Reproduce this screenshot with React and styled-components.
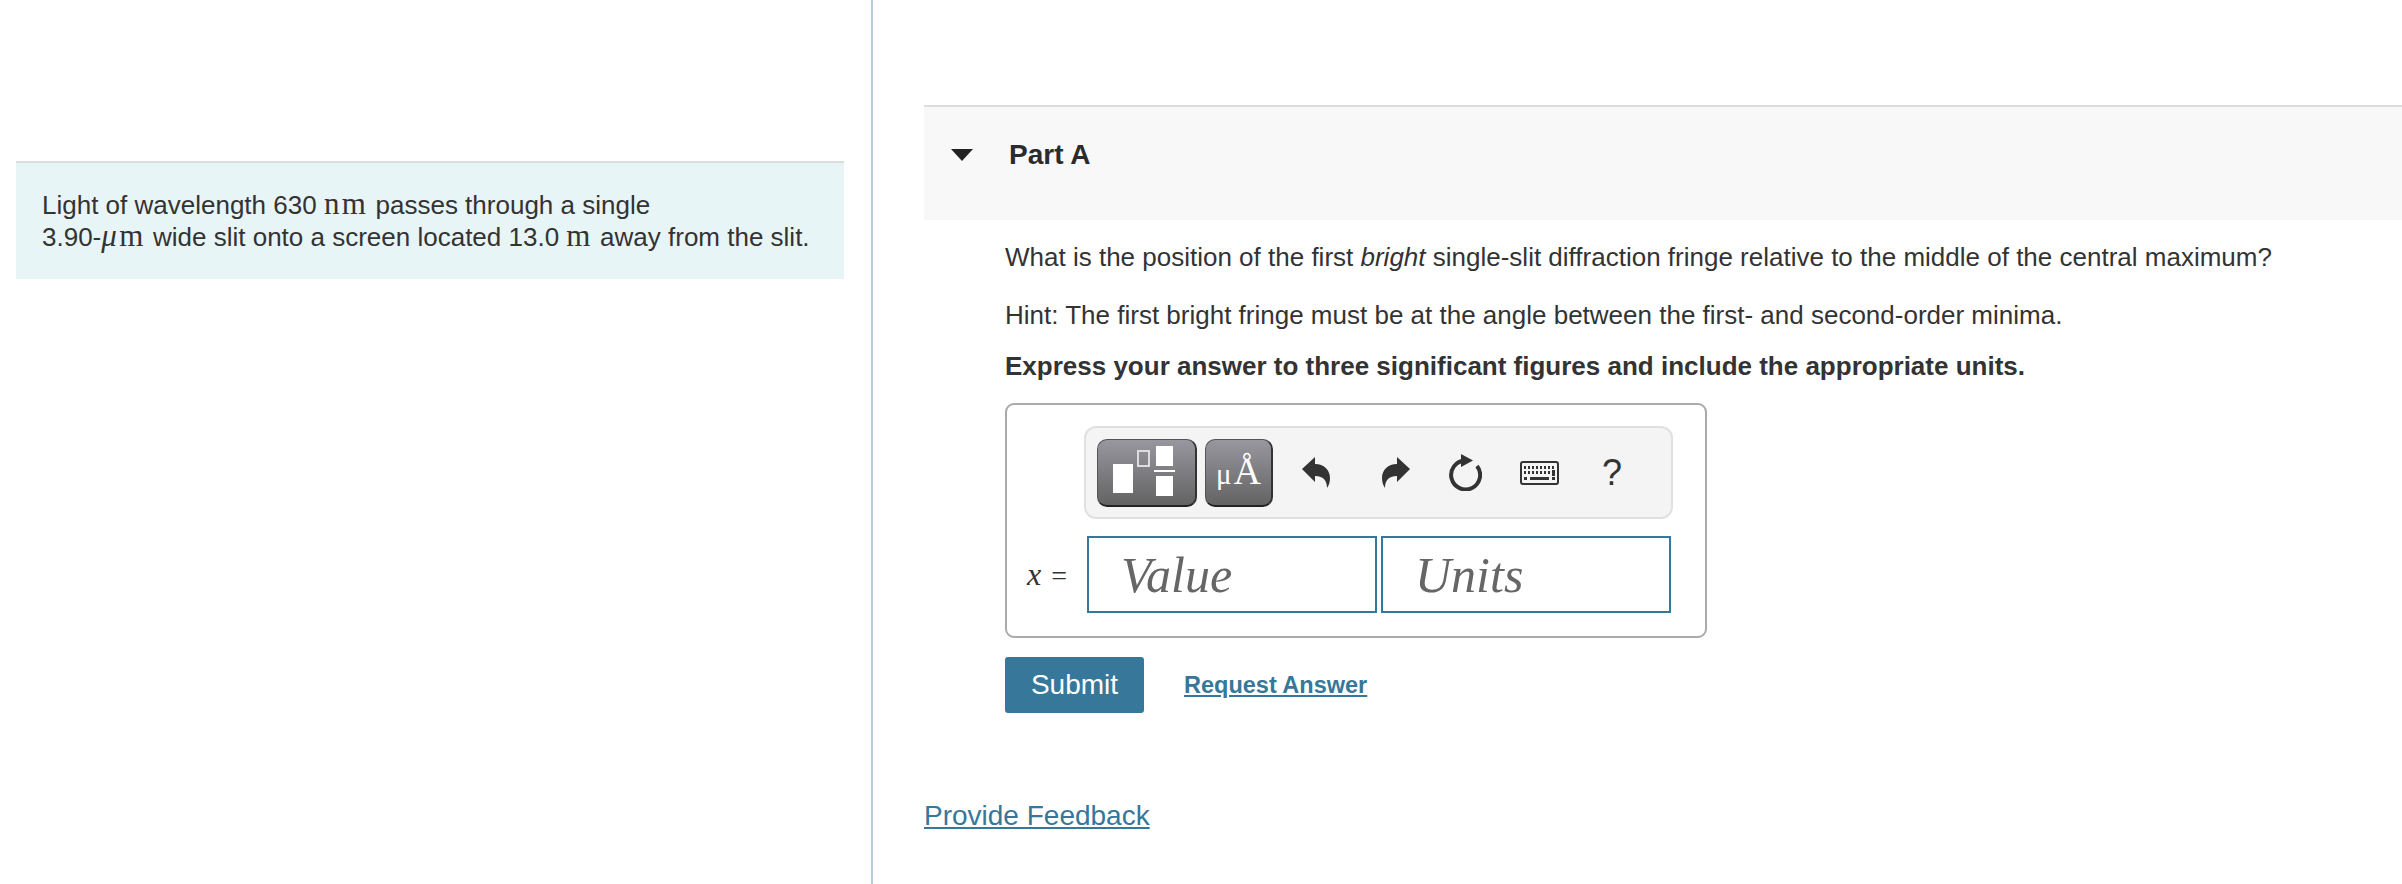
import styled, { createGlobalStyle } from 'styled-components';

const GlobalStyle = createGlobalStyle`
  html, body {
    margin: 0;
    background: #fff;
    overflow: hidden;
  }

  body {
    font-family: "Liberation Sans", Arial, sans-serif;
    color: #333;
  }
`;

const Page = styled.div`
  display: flex;
  height: 884px;
`;

const LeftPane = styled.aside`
  box-sizing: border-box;
  flex: 0 0 873px;
  padding: 161px 27px 0 16px;
  border-right: 2px solid #b9cde0;
`;

const Intro = styled.div`
  box-sizing: border-box;
  height: 118px;
  padding: 26px 26px 0;
  border-top: 2px solid #ddd;
  background: #e8f5f6;
  font-size: 26px;
  line-height: 32px;
`;

const MathText = styled.span`
  font-family: "Liberation Serif", serif;
  font-size: 31px;
  line-height: 20px;
  letter-spacing: 2.4px;
  font-style: ${({ $italic }) => ($italic ? 'italic' : 'normal')};
`;

const RightPane = styled.main`
  flex: 1;
  padding: 105px 0 0 51px;
`;

const PartHeader = styled.div`
  display: flex;
  align-items: flex-start;
  box-sizing: border-box;
  height: 115px;
  padding: 34px 0 0 27px;
  border-top: 2px solid #ddd;
  background: #f8f8f8;
`;

const Caret = styled.svg`
  flex: none;
  width: 22px;
  height: 12px;
  margin: 8px 36px 0 0;
`;

const PartTitle = styled.h2`
  margin: 0;
  font-size: 28px;
  line-height: 28px;
  font-weight: 700;
  color: #2b2b2b;
`;

const PartBody = styled.div`
  padding: 0 0 0 81px;
`;

const Paragraph = styled.p`
  margin: ${({ $top }) => $top}px 0 0;
  font-size: 26px;
  line-height: 32px;
  font-weight: ${({ $bold }) => ($bold ? 700 : 400)};
`;

const AnswerBox = styled.div`
  box-sizing: border-box;
  width: 702px;
  height: 235px;
  margin-top: 21px;
  padding: 21px 34px 0 77px;
  border: 2px solid #aaa;
  border-radius: 9px;
`;

const Toolbar = styled.div`
  display: flex;
  align-items: center;
  box-sizing: border-box;
  width: 589px;
  height: 93px;
  padding: 0 0 0 11px;
  border: 2px solid #e0e0e0;
  border-radius: 12px;
  background: #f4f4f4;
`;

const TemplateButton = styled.button`
  display: flex;
  align-items: center;
  justify-content: center;
  box-sizing: border-box;
  flex: none;
  width: ${({ $width }) => $width}px;
  height: 68px;
  margin-right: 8px;
  padding: 0;
  border: 1px solid #555;
  border-bottom: 2px solid #222;
  border-right: 2px solid #333;
  border-radius: 10px;
  background: linear-gradient(#98979f, #636363);
`;

const IconSlot = styled.span`
  display: flex;
  justify-content: center;
  margin-left: ${({ $left }) => $left}px;
`;

const Help = styled.span`
  margin-left: 43px;
  font-size: 36px;
  line-height: 36px;
  color: #333;
`;

const InputRow = styled.div`
  display: flex;
  align-items: center;
  gap: 4px;
  margin: 17px 0 0 -57px;
`;

const Variable = styled.span`
  flex: none;
  width: 56px;
  font-family: "Liberation Serif", serif;
  font-size: 28px;
  letter-spacing: 1.5px;
  white-space: nowrap;

  i {
    font-size: 32px;
  }
`;

const Field = styled.div`
  display: flex;
  align-items: center;
  box-sizing: border-box;
  width: 290px;
  height: 77px;
  padding: 0 0 0 32px;
  border: 2px solid #37779a;
  font-family: "Liberation Serif", serif;
  font-style: italic;
  font-size: 50px;
  color: #666;
`;

const Actions = styled.div`
  display: flex;
  align-items: center;
  gap: 40px;
  margin-top: 19px;
`;

const SubmitButton = styled.button`
  width: 139px;
  height: 56px;
  padding: 0;
  border: 0;
  border-radius: 3px;
  background: #37779a;
  color: #fff;
  font-family: inherit;
  font-size: 28px;
`;

const RequestLink = styled.a`
  color: #37779a;
  font-size: 23.5px;
  font-weight: 700;
  text-decoration: underline;
`;

const FeedbackLink = styled.a`
  display: inline-block;
  margin-top: 86px;
  color: #37779a;
  font-size: 28px;
  line-height: 34px;
  text-decoration: underline;
`;

const UnitsGlyphs = styled.span`
  color: #fff;
  font-family: "Liberation Serif", serif;
  font-size: 38px;
  line-height: 60px;

  small {
    font-size: 29px;
    margin-right: 2px;
  }
`;

const TemplatesGlyph = styled.svg`
  margin-right: 4px;
`;

function TemplatesIcon() {
  return (
    <TemplatesGlyph width="64" height="52" viewBox="0 0 64 52" fill="#fff">
      <rect x="0" y="18" width="20" height="29" />
      <rect x="25" y="5" width="11" height="15" fill="none" stroke="#ddd" strokeWidth="2" />
      <rect x="43" y="0" width="17" height="20" />
      <rect x="41" y="24" width="21" height="2" />
      <rect x="43" y="30" width="17" height="20" />
    </TemplatesGlyph>
  );
}

function UndoIcon({ flip }) {
  return (
    <svg
      width="28"
      height="31"
      viewBox="0 0 28 31"
      fill="#333"
      style={flip ? { transform: 'scaleX(-1)' } : undefined}
    >
      <path d="M0 12 13 0v7c9 0 15 6 15 14 0 4-1 7-3 10 0-7-3-12-12-12v6z" />
    </svg>
  );
}

function ReloadIcon() {
  return (
    <svg width="34" height="37" viewBox="0 0 34 37" fill="none">
      <path d="M17 6.5A14.5 14.5 0 1 0 29 12" stroke="#333" strokeWidth="4" />
      <path d="M13 0l12 6.5-12 6.500z" fill="#333" />
    </svg>
  );
}

function KeyboardIcon() {
  const topKeys = [5, 9, 13, 17, 21, 25, 29, 33];
  const midKeys = [5, 9, 13, 17, 21, 25, 29];
  return (
    <svg width="39" height="24" viewBox="0 0 39 24" fill="#333">
      <rect x="1" y="1" width="37" height="22" rx="2" fill="none" stroke="#333" strokeWidth="2" />
      {topKeys.map((x) => (
        <rect key={x} x={x - 1} y="5" width="2" height="3" />
      ))}
      {midKeys.map((x) => (
        <rect key={x} x={x - 1} y="10" width="2" height="3" />
      ))}
      <rect x="32" y="9" width="3" height="6" />
      <rect x="4" y="16" width="3" height="3" />
      <rect x="10" y="16" width="19" height="3" />
      <rect x="32" y="16" width="3" height="3" />
    </svg>
  );
}

export default function App() {
  return (
    <Page>
      <GlobalStyle />
      <LeftPane>
        <Intro>
          Light of wavelength 630 <MathText>nm</MathText> passes through a single
          <br />
          3.90-<MathText $italic>μ</MathText>
          <MathText>m</MathText> wide slit onto a screen located 13.0 <MathText>m</MathText> away
          from the slit.
        </Intro>
      </LeftPane>
      <RightPane>
        <PartHeader>
          <Caret viewBox="0 0 22 12">
            <path d="M0 0h22L11 12z" fill="#222" />
          </Caret>
          <PartTitle>Part A</PartTitle>
        </PartHeader>
        <PartBody>
          <Paragraph $top={21}>
            What is the position of the first <em>bright</em> single-slit diffraction fringe relative
            to the middle of the central maximum?
          </Paragraph>
          <Paragraph $top={26}>
            Hint: The first bright fringe must be at the angle between the first- and second-order
            minima.
          </Paragraph>
          <Paragraph $top={19} $bold>
            Express your answer to three significant figures and include the appropriate units.
          </Paragraph>
          <AnswerBox>
            <Toolbar>
              <TemplateButton $width={100} aria-label="Templates">
                <TemplatesIcon />
              </TemplateButton>
              <TemplateButton $width={68} aria-label="Units">
                <UnitsGlyphs>
                  <small>μ</small>Å
                </UnitsGlyphs>
              </TemplateButton>
              <IconSlot $left={21}>
                <UndoIcon />
              </IconSlot>
              <IconSlot $left={52}>
                <UndoIcon flip />
              </IconSlot>
              <IconSlot $left={38}>
                <ReloadIcon />
              </IconSlot>
              <IconSlot $left={38}>
                <KeyboardIcon />
              </IconSlot>
              <Help>?</Help>
            </Toolbar>
            <InputRow>
              <Variable>
                <i>x</i> =
              </Variable>
              <Field>Value</Field>
              <Field>Units</Field>
            </InputRow>
          </AnswerBox>
          <Actions>
            <SubmitButton>Submit</SubmitButton>
            <RequestLink href="#">Request Answer</RequestLink>
          </Actions>
        </PartBody>
        <FeedbackLink href="#">Provide Feedback</FeedbackLink>
      </RightPane>
    </Page>
  );
}
